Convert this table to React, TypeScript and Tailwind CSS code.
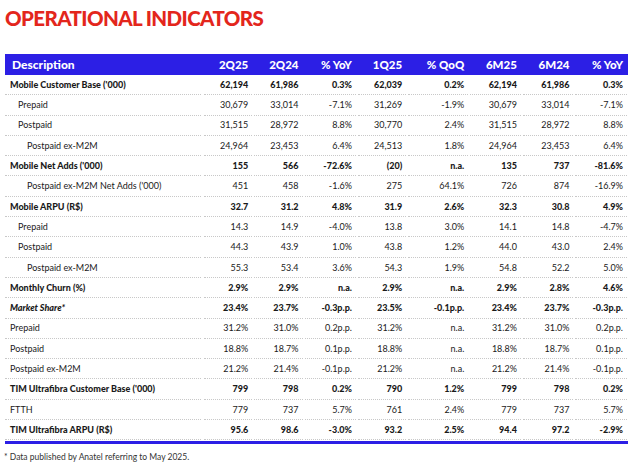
import React from 'react';

type Row = {
  label: string;
  level: 0 | 1 | 2;
  bold?: boolean;
  italic?: boolean;
  values: string[];
};

const cols = ['2Q25', '2Q24', '% YoY', '1Q25', '% QoQ', '6M25', '6M24', '% YoY'];

const rows: Row[] = [
  { label: "Mobile Customer Base ('000)", level: 0, bold: true, values: ['62,194', '61,986', '0.3%', '62,039', '0.2%', '62,194', '61,986', '0.3%'] },
  { label: 'Prepaid', level: 1, values: ['30,679', '33,014', '-7.1%', '31,269', '-1.9%', '30,679', '33,014', '-7.1%'] },
  { label: 'Postpaid', level: 1, values: ['31,515', '28,972', '8.8%', '30,770', '2.4%', '31,515', '28,972', '8.8%'] },
  { label: 'Postpaid ex-M2M', level: 2, values: ['24,964', '23,453', '6.4%', '24,513', '1.8%', '24,964', '23,453', '6.4%'] },
  { label: "Mobile Net Adds ('000)", level: 0, bold: true, values: ['155', '566', '-72.6%', '(20)', 'n.a.', '135', '737', '-81.6%'] },
  { label: "Postpaid ex-M2M Net Adds ('000)", level: 2, values: ['451', '458', '-1.6%', '275', '64.1%', '726', '874', '-16.9%'] },
  { label: 'Mobile ARPU (R$)', level: 0, bold: true, values: ['32.7', '31.2', '4.8%', '31.9', '2.6%', '32.3', '30.8', '4.9%'] },
  { label: 'Prepaid', level: 1, values: ['14.3', '14.9', '-4.0%', '13.8', '3.0%', '14.1', '14.8', '-4.7%'] },
  { label: 'Postpaid', level: 1, values: ['44.3', '43.9', '1.0%', '43.8', '1.2%', '44.0', '43.0', '2.4%'] },
  { label: 'Postpaid ex-M2M', level: 2, values: ['55.3', '53.4', '3.6%', '54.3', '1.9%', '54.8', '52.2', '5.0%'] },
  { label: 'Monthly Churn (%)', level: 0, bold: true, values: ['2.9%', '2.9%', 'n.a.', '2.9%', 'n.a.', '2.9%', '2.8%', '4.6%'] },
  { label: 'Market Share*', level: 0, bold: true, italic: true, values: ['23.4%', '23.7%', '-0.3p.p.', '23.5%', '-0.1p.p.', '23.4%', '23.7%', '-0.3p.p.'] },
  { label: 'Prepaid', level: 0, values: ['31.2%', '31.0%', '0.2p.p.', '31.2%', 'n.a.', '31.2%', '31.0%', '0.2p.p.'] },
  { label: 'Postpaid', level: 0, values: ['18.8%', '18.7%', '0.1p.p.', '18.8%', 'n.a.', '18.8%', '18.7%', '0.1p.p.'] },
  { label: 'Postpaid ex-M2M', level: 0, values: ['21.2%', '21.4%', '-0.1p.p.', '21.2%', 'n.a.', '21.2%', '21.4%', '-0.1p.p.'] },
  { label: "TIM Ultrafibra Customer Base ('000)", level: 0, bold: true, values: ['799', '798', '0.2%', '790', '1.2%', '799', '798', '0.2%'] },
  { label: 'FTTH', level: 0, values: ['779', '737', '5.7%', '761', '2.4%', '779', '737', '5.7%'] },
  { label: 'TIM Ultrafibra ARPU (R$)', level: 0, bold: true, values: ['95.6', '98.6', '-3.0%', '93.2', '2.5%', '94.4', '97.2', '-2.9%'] },
];

const indent = ['pl-[5px]', 'pl-[13px]', 'pl-[22px]'];

export default function App() {
  return (
    <div className="w-[640px] h-[468px] bg-white text-[#1a1a1a] font-['Lato',sans-serif] overflow-hidden">
      <h1 className="pl-[5px] pt-[4px] text-[20.5px] leading-[28px] font-black text-[#e3261c] tracking-[-0.6px]">
        OPERATIONAL INDICATORS
      </h1>

      <div className="ml-[5px] mt-[22px] w-[623px]">
        <table className="w-full border-collapse text-[9px]">
          <colgroup>
            <col className="w-[198px]" />
            {cols.map((_, i) => (
              <col key={i} />
            ))}
          </colgroup>
          <thead>
            <tr className="bg-[#2c1fe5] text-white h-[21px]">
              <th className="text-left pl-[7px] font-black text-[12px]">Description</th>
              {cols.map((c, i) => (
                <th key={i} className="text-right pr-[5px] font-black text-[11.5px]">{c}</th>
              ))}
            </tr>
          </thead>
          <tbody>
            {rows.map((r, ri) => (
              <tr key={ri} className="h-[20.3px]">
                <td className="p-0">
                  <div
                    className={`h-[20.3px] flex items-center border-b border-dotted border-[#c8c8c8] mr-[2px] ${indent[r.level]} ${r.bold ? 'font-black' : ''} ${r.italic ? 'italic' : ''}`}
                  >
                    {r.label}
                  </div>
                </td>
                {r.values.map((v, vi) => (
                  <td key={vi} className="p-0">
                    <div
                      className={`h-[20.3px] flex items-center justify-end pr-[4px] border-b border-dotted border-[#c8c8c8] mx-[1px] ${r.bold ? 'font-black' : ''}`}
                    >
                      {v}
                    </div>
                  </td>
                ))}
              </tr>
            ))}
          </tbody>
        </table>
        <div className="h-[3px] bg-[#2c1fe5] mt-[1px]" />
      </div>

      <p className="pl-[4px] mt-[7px] text-[8.5px] text-[#333]">* Data published by Anatel referring to May 2025.</p>
    </div>
  );
}
